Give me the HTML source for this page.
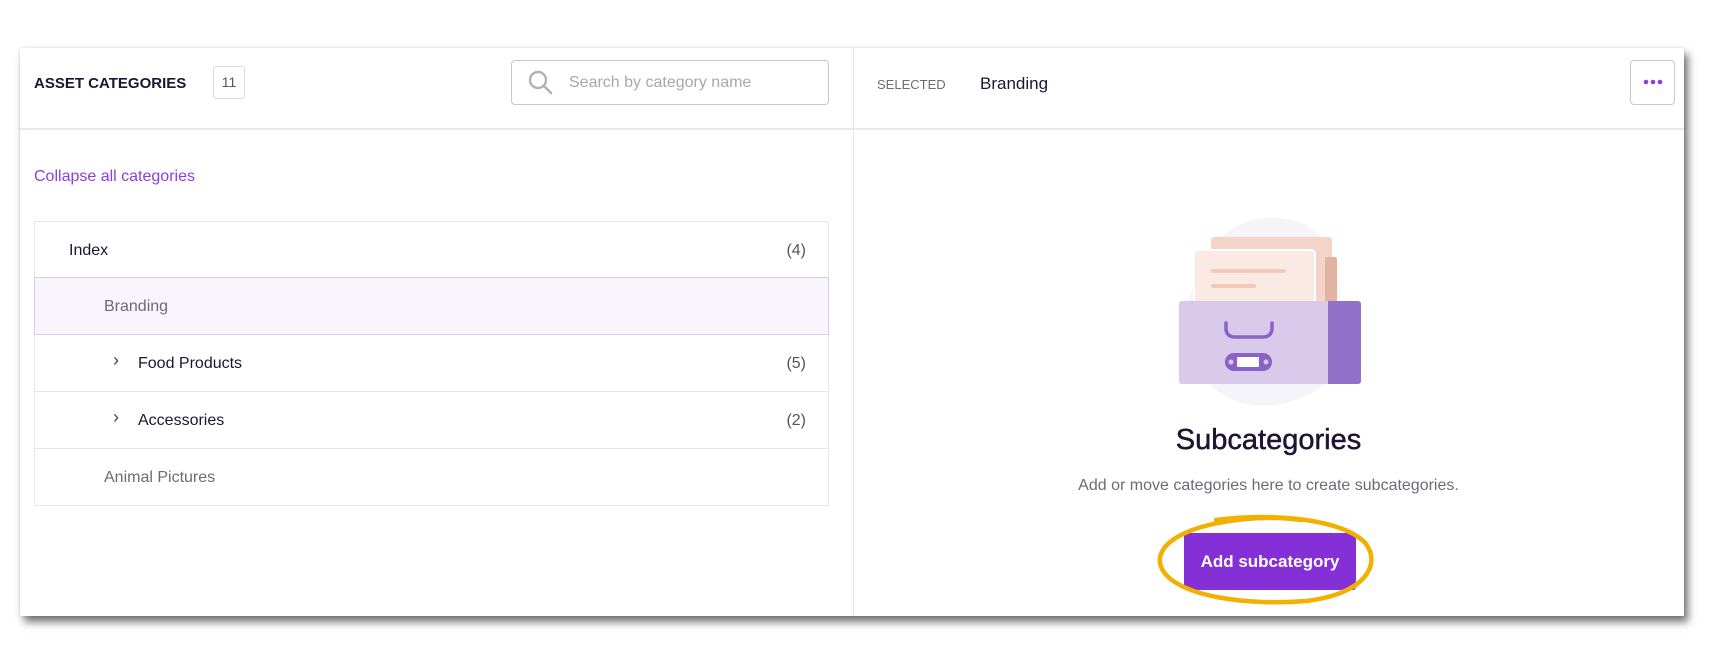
<!DOCTYPE html>
<html><head><meta charset="utf-8"><style>
*{box-sizing:border-box;margin:0;padding:0}
body{width:1720px;height:669px;background:#fff;font-family:"Liberation Sans",sans-serif;position:relative;overflow:hidden}
.panel{position:absolute;left:20px;top:48px;width:1664px;height:568px;background:#fff;box-shadow:4px 6px 8px rgba(0,0,0,.55),0 0 3px rgba(0,0,0,.12)}
.a{position:absolute;white-space:nowrap}
.hline{position:absolute;left:0;right:0;top:80px;height:2px;background:#e8e6ee}
.vline{position:absolute;left:833px;top:0;bottom:0;width:1px;background:#e4e2ea}
.row{position:absolute;left:14px;width:795px;height:57px;border:1px solid #e6e4ec;border-top:none}
.row span{position:absolute;top:20px;font-size:16px}
.cnt{right:22px;color:#555}
</style></head><body>
<div class="panel">
  <div class="a" style="left:14px;top:27px;font-size:15px;font-weight:bold;color:#1c1533">ASSET CATEGORIES</div>
  <div class="a" style="left:193px;top:18px;width:32px;height:33px;border:1px solid #dcdae2;border-radius:3px;font-size:14px;color:#555;text-align:center;line-height:31px">11</div>
  <div class="a" style="left:491px;top:12px;width:318px;height:45px;border:1.5px solid #c9c6d0;border-radius:4px">
    <svg width="30" height="30" style="position:absolute;left:14px;top:7px" viewBox="0 0 30 30"><circle cx="12" cy="12" r="8" fill="none" stroke="#b4b1ba" stroke-width="2.4"/><path d="M18 18l7 7" stroke="#b4b1ba" stroke-width="2.6" stroke-linecap="round"/></svg>
    <span class="a" style="left:57px;top:13px;font-size:16px;color:#aaa7b0">Search by category name</span>
  </div>
  <div class="hline"></div>
  <div class="vline"></div>
  <div class="a" style="left:14px;top:120px;font-size:16px;color:#8a3ee0">Collapse all categories</div>
  <div class="row" style="top:173px;border-top:1px solid #e6e4ec;height:57px"><span style="left:34px;color:#1c1533">Index</span><span class="cnt">(4)</span></div>
  <div class="row" style="top:229px;height:58px;background:#f8f5fd;border:1px solid #dcc8f3"><span style="left:69px;color:#6f6a78">Branding</span></div>
  <div class="row" style="top:287px"><span style="left:78px;top:15px;color:#444;font-size:18px">›</span><span style="left:103px;color:#1c1533">Food Products</span><span class="cnt">(5)</span></div>
  <div class="row" style="top:344px"><span style="left:78px;top:15px;color:#444;font-size:18px">›</span><span style="left:103px;color:#1c1533">Accessories</span><span class="cnt">(2)</span></div>
  <div class="row" style="top:401px"><span style="left:69px;color:#6f6a78">Animal Pictures</span></div>

  <div class="a" style="left:857px;top:29px;font-size:13px;color:#6f6a78">SELECTED</div>
  <div class="a" style="left:960px;top:26px;font-size:17px;color:#1c1533">Branding</div>
  <div class="a" style="left:1610px;top:12px;width:45px;height:45px;border:1.5px solid #c9c6d0;border-radius:4px;text-align:center">
    <svg width="24" height="8" style="margin-top:17px" viewBox="0 0 24 8"><circle cx="5" cy="4" r="2.3" fill="#8a3ee0"/><circle cx="12" cy="4" r="2.3" fill="#8a3ee0"/><circle cx="19" cy="4" r="2.3" fill="#8a3ee0"/></svg>
  </div>

  <svg class="a" style="left:1150px;top:165px" width="200" height="200" viewBox="0 0 200 200">
    <path d="M65 14 C95 -2 145 0 160 40 C175 80 180 150 150 175 C120 195 80 200 50 180 C20 160 5 110 25 70 C35 45 45 25 65 14Z" fill="#f6f4fb"/>
    <rect x="41" y="24" width="121" height="90" rx="3" fill="#f4d4c9"/>
    <rect x="155" y="44" width="12" height="70" rx="2" fill="#e2b2a3"/>
    <rect x="24" y="37" width="121" height="80" rx="4" fill="#fbe9e3" stroke="#fff" stroke-width="2"/>
    <rect x="41" y="56" width="75" height="4" rx="2" fill="#f3c9bc"/>
    <rect x="41" y="71" width="45" height="4" rx="2" fill="#f3c9bc"/>
    <rect x="9" y="88" width="182" height="83" rx="3" fill="#d9c9eb"/>
    <path d="M158 88h30a3 3 0 0 1 3 3v77a3 3 0 0 1-3 3h-30z" fill="#9070c8"/>
    <path d="M56 110v6a8 8 0 0 0 8 8h30a8 8 0 0 0 8-8v-6" fill="none" stroke="#8a62c4" stroke-width="3.5" stroke-linecap="round"/>
    <rect x="55" y="140" width="47" height="18" rx="9" fill="#8a62c4"/>
    <rect x="67" y="144" width="22" height="10" rx="1" fill="#fff"/>
    <circle cx="61" cy="149" r="2.5" fill="#d9c9eb"/><circle cx="96" cy="149" r="2.5" fill="#d9c9eb"/>
  </svg>

  <div class="a" style="left:833px;width:831px;top:376px;text-align:center;font-size:29px;color:#1c1533;-webkit-text-stroke:0.5px #1c1533">Subcategories</div>
  <div class="a" style="left:833px;width:831px;top:429px;text-align:center;font-size:16px;color:#6f6a78">Add or move categories here to create subcategories.</div>
  <div class="a" style="left:1164px;top:485px;width:172px;height:57px;background:#8530d6;border-radius:3px;color:#fff;font-size:17px;font-weight:bold;text-align:center;line-height:57px">Add subcategory</div>
  <svg class="a" style="left:1136px;top:466px" width="226" height="92" viewBox="0 0 226 92"><path d="M60 6 C120 -2 190 6 210 30 C225 50 210 80 150 87 C90 92 20 82 6 55 C-4 35 20 12 90 5 C110 3 130 4 145 6" fill="none" stroke="#f2b000" stroke-width="4.5" stroke-linecap="round"/></svg>
</div>
</body></html>
